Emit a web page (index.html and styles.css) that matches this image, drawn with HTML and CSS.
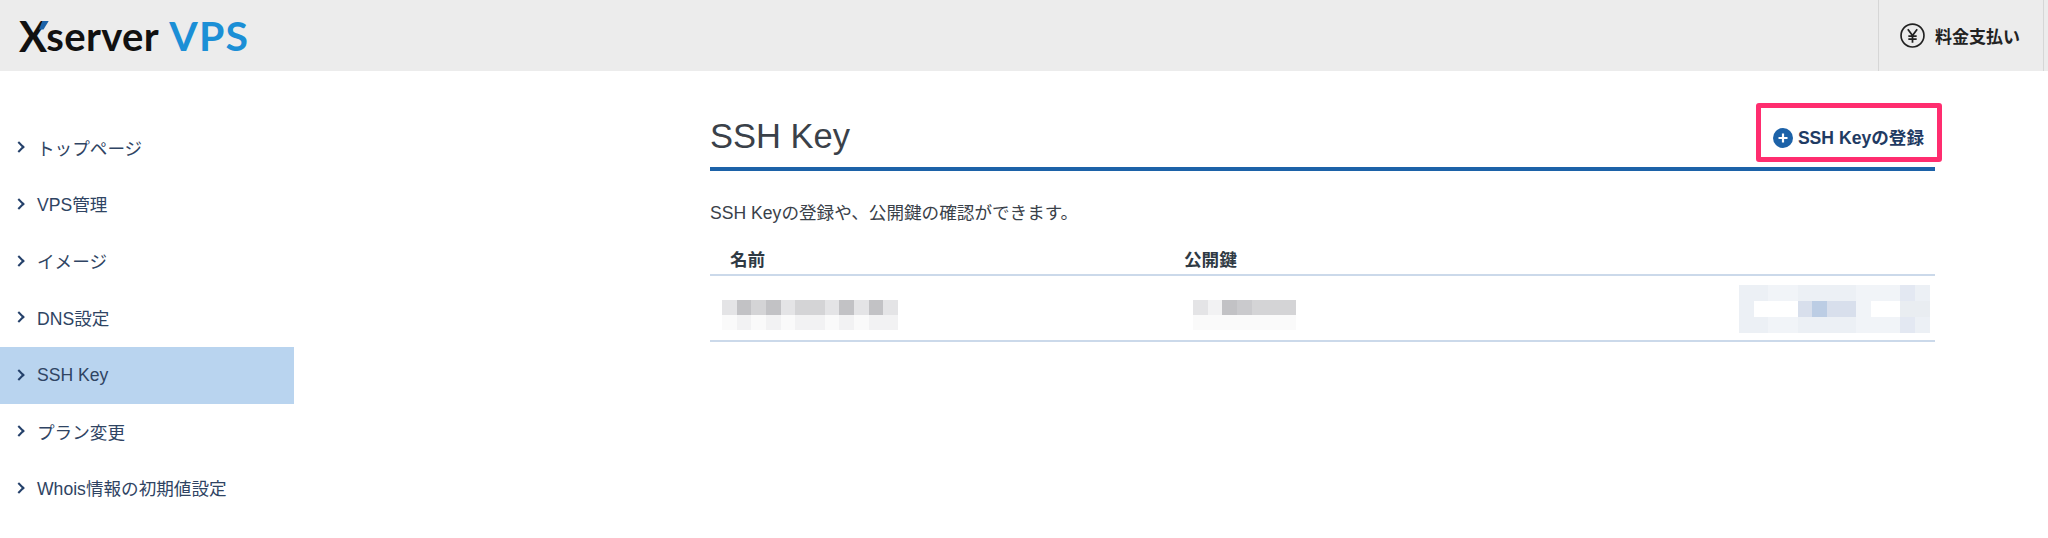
FILE: index.html
```html
<!DOCTYPE html>
<html lang="ja">
<head>
<meta charset="utf-8">
<title>SSH Key</title>
<link rel="stylesheet" href="styles.css">
</head>
<body>
<header class="topbar">
  <div class="logo"><span class="logo-x">X<i class="logo-tick"></i></span><span class="logo-server">server</span><span class="logo-vps">VPS</span></div>
  <a class="pay">
    <svg class="yen" viewBox="0 0 24 24" width="25" height="25"><circle cx="12" cy="12" r="11" fill="none" stroke="#222" stroke-width="1.6"/><path d="M7.5 6l4.5 6 4.5-6M12 12v7M8 12.5h8M8 15.5h8" fill="none" stroke="#222" stroke-width="1.7"/></svg>
    <span>料金支払い</span>
  </a>
</header>
<div class="layout">
  <nav class="side">
    <a class="item"><i class="chev"></i>トップページ</a>
    <a class="item"><i class="chev"></i>VPS管理</a>
    <a class="item"><i class="chev"></i>イメージ</a>
    <a class="item"><i class="chev"></i>DNS設定</a>
    <a class="item active"><i class="chev"></i>SSH Key</a>
    <a class="item"><i class="chev"></i>プラン変更</a>
    <a class="item"><i class="chev"></i>Whois情報の初期値設定</a>
  </nav>
  <main class="main">
    <div class="head">
      <h1>SSH Key</h1>
      <a class="add">
        <svg viewBox="0 0 20 20" width="20" height="20"><circle cx="10" cy="10" r="10" fill="#1c62a8"/><path d="M10 5.5v9M5.5 10h9" stroke="#fff" stroke-width="2.2"/></svg>
        <span>SSH Keyの登録</span>
        <i class="mark"></i>
      </a>
    </div>
    <p class="lead">SSH Keyの登録や、公開鍵の確認ができます。</p>
    <div class="thead"><span class="c1">名前</span><span class="c2">公開鍵</span></div>
    <div class="row">
      <div class="mosaic name">
        <i class="g1"></i><i class="g3"></i><i class="g2"></i><i class="g3"></i><i class="g1"></i><i class="g2"></i><i class="g2"></i><i class="g1"></i><i class="g3"></i><i class="g1"></i><i class="g3"></i><i class="g1"></i>
        <i class="f1"></i><i class="f2"></i><i class="f1"></i><i class="f2"></i><i class="f1"></i><i class="f2"></i><i class="f2"></i><i class="f1"></i><i class="f2"></i><i class="f1"></i><i class="f2"></i><i class="f2"></i>
      </div>
      <div class="mosaic key">
        <i class="g1"></i><i class="f2"></i><i class="g3"></i><i class="g4"></i><i class="g2"></i><i class="g2"></i><i class="g2"></i>
        <i class="f1"></i><i class="f1"></i><i class="f1"></i><i class="f1"></i><i class="f1"></i><i class="f1"></i><i class="f1"></i>
      </div>
      <div class="mosaic act">
        <i class="b2"></i><i class="b2"></i><i class="b1"></i><i class="b1"></i><i class="b2"></i><i class="b2"></i><i class="b2"></i><i class="b2"></i><i class="b1"></i><i class="b1"></i><i class="b1"></i><i class="b5"></i><i class="b2"></i>
        <i class="b2"></i><i class="w"></i><i class="w"></i><i class="w"></i><i class="b4"></i><i class="b6"></i><i class="b4"></i><i class="b4"></i><i class="b1"></i><i class="w"></i><i class="w"></i><i class="b3"></i><i class="b3"></i>
        <i class="b2"></i><i class="b2"></i><i class="b1"></i><i class="b1"></i><i class="b2"></i><i class="b2"></i><i class="b2"></i><i class="b2"></i><i class="b1"></i><i class="b1"></i><i class="b1"></i><i class="b5"></i><i class="b2"></i>
      </div>
    </div>
  </main>
</div>
</body>
</html>
```
FILE: styles.css
```css
* { box-sizing: border-box; }
html, body { margin: 0; height: 538px; overflow: hidden; background: #fff; }
body { font-family: "Liberation Sans", "Noto Sans CJK JP", sans-serif; color: #3a4149; font-size: 17.6px; }

.topbar { height: 71px; background: #ececec; display: flex; justify-content: space-between; }
.logo { display: flex; align-items: center; padding-left: 19px; font-family: Lato, sans-serif; font-weight: 700; font-size: 40px; color: #111; line-height: 1; }
.logo-x { position: relative; font-size: 42px; letter-spacing: -1px; }
.logo-tick { position: absolute; left: 20px; top: 6px; width: 10px; height: 9px; background: #1c62a8; clip-path: polygon(35% 0, 100% 0, 45% 100%, 0 100%); }
.logo-server { letter-spacing: 0.4px; }
.logo-vps { color: #1b8fd6; margin-left: 10px; font-size: 41px; letter-spacing: 1.2px; }
.pay { width: 166px; margin-right: 4px; border-left: 1px solid #d6d6d6; border-right: 1px solid #d6d6d6; display: flex; align-items: center; padding-left: 21px; gap: 10px; font-weight: 700; font-size: 17px; color: #222; }

.layout { display: flex; }
.side { width: 294px; padding-top: 48.7px; flex: none; }
.item { display: flex; align-items: center; height: 56.8px; padding-bottom: 2px; font-size: 17.6px; color: #2f4463; }
.chev { width: 8px; height: 8px; margin: 0 14px 0 15px; border-top: 2px solid #24406a; border-right: 2px solid #24406a; transform: rotate(45deg); flex: none; }
.active { background: #b9d4ef; padding-bottom: 0; }

.main { margin-left: 416px; width: 1225px; }
.head { height: 100px; display: flex; justify-content: space-between; align-items: flex-end; border-bottom: 4px solid #1c62a8; padding-bottom: 11px; }
h1 { margin: 0; font-weight: 400; font-size: 34.5px; line-height: 40px; color: #3a4149; }
.add { position: relative; display: flex; align-items: center; gap: 5px; margin-right: 11px; font-weight: 700; font-size: 17.6px; line-height: 20px; color: #1f3b63; padding-bottom: 8px; }
.mark { position: absolute; left: -17px; right: -18px; top: -25px; bottom: -6px; border: 5px solid #ff2d6f; border-radius: 3px; }
.lead { margin: 30px 0 0; font-size: 17.6px; line-height: 24px; }
.thead { display: flex; height: 38px; margin-top: 13px; border-bottom: 2px solid #cbd9ea; font-weight: 700; font-size: 17.6px; color: #2f3a44; line-height: 44px; }
.c1 { margin-left: 20px; width: 454px; }
.row { position: relative; height: 66px; border-bottom: 2px solid #cbd9ea; }

.mosaic { position: absolute; display: grid; grid-auto-rows: 15px; }
.mosaic i { display: block; }
.name { left: 12px; top: 24px; grid-template-columns: repeat(12, 14.67px); }
.key { left: 483px; top: 24px; grid-template-columns: repeat(7, 14.67px); }
.act { left: 1029px; top: 9px; grid-template-columns: repeat(13, 14.67px); grid-auto-rows: 16px; }
.g1 { background: #e4e4e6; }
.g2 { background: #d4d4d6; }
.g3 { background: #c2c2c5; }
.g4 { background: #cacacd; }
.f1 { background: #fafafa; }
.f2 { background: #f2f2f3; }
.w { background: #fff; }
.b1 { background: #f1f4f8; }
.b2 { background: #ecf0f5; }
.b3 { background: #e9edf1; }
.b4 { background: #d8dfec; }
.b5 { background: #e3e8f2; }
.b6 { background: #bccde4; }
```
